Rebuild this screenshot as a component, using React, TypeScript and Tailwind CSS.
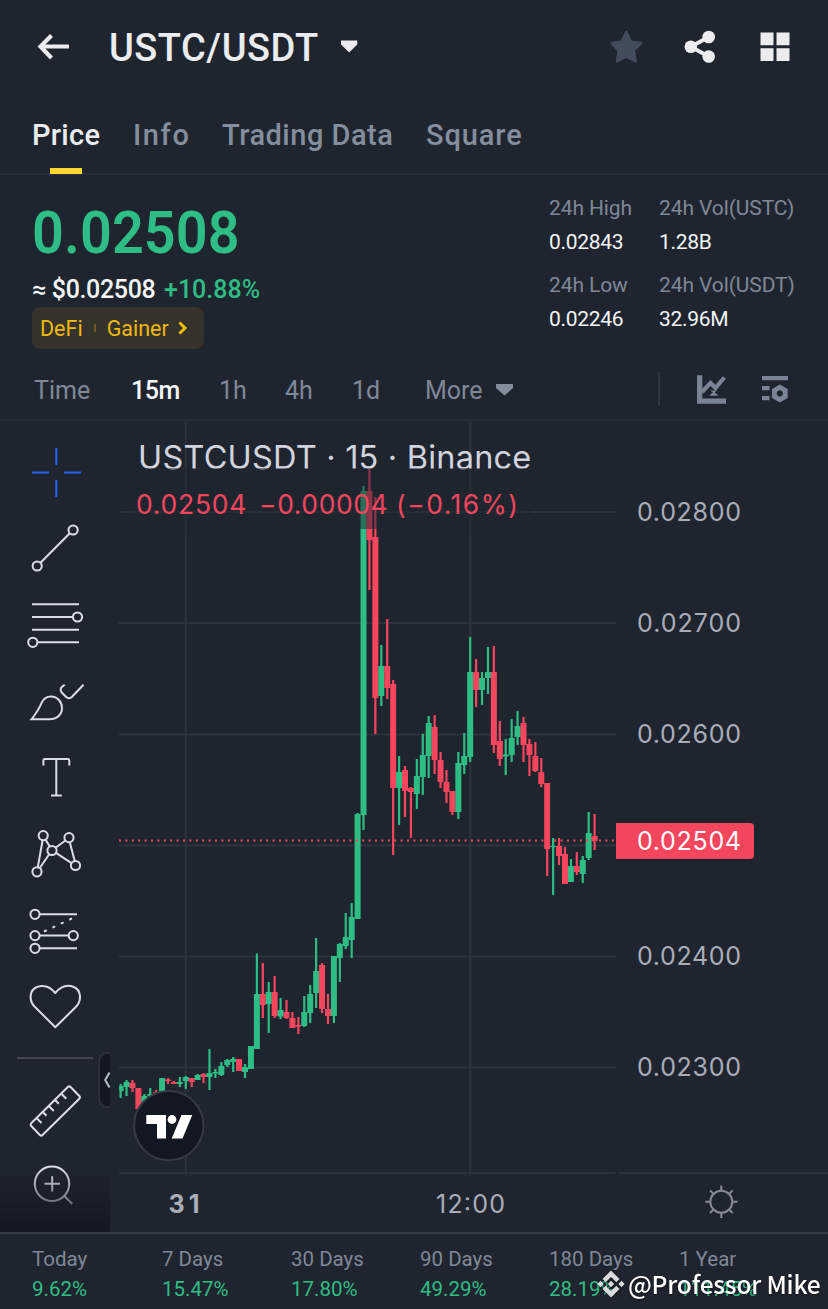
import React from "react";

type Candle = [color: "g" | "r", high: number, top: number, bottom: number, low: number];

const GREEN = "#2ebd85";
const RED = "#f6465d";

/* 15 minute candles, oldest first, in chart pixels */
const candles: Candle[] = [
  ["g", 1084, 1086, 1091, 1098], ["g", 1080, 1082, 1087, 1096], ["r", 1080, 1083, 1088, 1092],
  ["r", 1088, 1088, 1109, 1110], ["g", 1094, 1096, 1104, 1110], ["g", 1088, 1094, 1096, 1100],
  ["r", 1090, 1092, 1094, 1098], ["g", 1078, 1078, 1092, 1095], ["r", 1078, 1079.5, 1081, 1084],
  ["r", 1081, 1082, 1084, 1084], ["g", 1077, 1082, 1084, 1087], ["g", 1076, 1077, 1081, 1089],
  ["r", 1078, 1078, 1082, 1087], ["g", 1074, 1075, 1080, 1080], ["r", 1073, 1074, 1077, 1083],
  ["g", 1049, 1073, 1077, 1090], ["g", 1069, 1072, 1073.5, 1078], ["g", 1062, 1066, 1075, 1076],
  ["g", 1059, 1060, 1065, 1067], ["g", 1057, 1059, 1062, 1072], ["r", 1059, 1059, 1071, 1071],
  ["g", 1064, 1067, 1072, 1078], ["g", 1046, 1046, 1069, 1069], ["g", 953.5, 994, 1049, 1049],
  ["r", 963, 994, 1005, 1018], ["g", 982, 992, 1004, 1033], ["r", 976, 992, 1016, 1018],
  ["g", 998, 1010, 1016.5, 1019], ["r", 1000, 1012, 1018, 1019], ["r", 1012, 1018, 1028, 1028],
  ["r", 1017, 1025, 1026.5, 1034], ["g", 996, 1012, 1026, 1027], ["g", 985, 994, 1013, 1023],
  ["g", 938, 971, 993, 1008], ["r", 963, 965, 1009, 1013], ["r", 994, 1009, 1016, 1024],
  ["g", 956, 956, 1016, 1023], ["g", 943, 944, 958, 982], ["g", 913, 937, 946, 949],
  ["g", 903, 917, 940, 958], ["g", 813, 814, 919, 919], ["g", 486, 491, 815, 830],
  ["r", 468, 491, 540, 590], ["r", 497, 537, 698, 734], ["g", 645, 666, 696, 706],
  ["r", 619, 666, 688, 699], ["r", 680, 684, 788, 855], ["g", 756, 772, 788, 825],
  ["r", 766, 770, 791, 817], ["r", 787, 788, 792, 838], ["g", 759, 776, 794, 809],
  ["g", 734, 755, 777, 795], ["g", 716, 723, 756, 778], ["r", 715, 727, 760, 774],
  ["r", 752, 760, 782, 788], ["r", 770, 782, 792, 803], ["r", 791, 791, 812, 815],
  ["g", 752, 763, 812, 819], ["g", 733, 756, 765, 774], ["g", 637, 672, 757, 762],
  ["r", 659, 672, 690, 707], ["g", 672, 678, 690, 705], ["g", 647, 672, 678, 694],
  ["r", 646, 672, 745, 753], ["r", 721, 741, 759, 766], ["g", 739, 754.5, 756.5, 775],
  ["g", 719, 738, 755, 762], ["g", 711, 726, 737, 745], ["r", 717, 723, 745, 762],
  ["r", 739, 744, 755, 776], ["r", 742, 756, 771, 772], ["r", 758, 772, 784, 787],
  ["r", 783, 783, 849, 876], ["g", 838, 846, 847, 895], ["r", 838, 846, 856, 865],
  ["r", 847, 854, 884, 884], ["g", 859, 866, 882, 882], ["r", 852, 866, 872, 875],
  ["g", 856, 860, 874, 883], ["g", 812, 833, 858, 860], ["r", 814, 836, 841, 850],
];

const axisLabels = [
  { y: 512, label: "0.02800" },
  { y: 623, label: "0.02700" },
  { y: 734.5, label: "0.02600" },
  { y: 845.5, label: "" },
  { y: 956.5, label: "0.02400" },
  { y: 1067.5, label: "0.02300" },
];

const performance = [
  { label: "Today", value: "9.62%" },
  { label: "7 Days", value: "15.47%" },
  { label: "30 Days", value: "17.80%" },
  { label: "90 Days", value: "49.29%" },
  { label: "180 Days", value: "28.19%" },
  { label: "1 Year", value: "111.45%" },
];

function Header() {
  return (
    <header className="flex h-[93px] items-center text-[#eaecef]">
      <svg className="ml-[37px] h-[26px] w-[33px] shrink-0" viewBox="37 33.5 33 26" fill="none" stroke="currentColor" strokeWidth="4.2">
        <path d="M69 46H41M51.5 35L40.5 46L51.5 57.5" />
      </svg>
      <h1 className="ml-[39px] w-[211px] pt-[3px] text-[38px] leading-[50px] font-medium tracking-[0.5px] whitespace-nowrap">USTC/USDT</h1>
      <svg className="ml-[20px] h-[14px] w-[19px]" viewBox="340 39.5 19 14" fill="currentColor">
        <path d="M341 40H357.3V44L349.2 52L341 44Z" />
      </svg>
      <svg className="ml-[250px] h-[34px] w-[34px] text-[#434c5a]" viewBox="609 30 34 34" fill="currentColor" stroke="currentColor" strokeWidth="2.5" strokeLinejoin="round">
        <path d="M626.3 32L631 41.8L641.3 43.1L633.8 50.6L635.6 61.3L626.3 56.4L617 61.3L618.8 50.6L611.6 43.1L621.6 41.8Z" />
      </svg>
      <svg className="ml-[41px] h-[34px] w-[32px]" viewBox="684 30 32 34" fill="currentColor">
        <path d="M708.7 37L690.8 46.7L708.7 56.5" fill="none" stroke="currentColor" strokeWidth="4" />
        <circle cx="708.7" cy="37" r="6.3" /><circle cx="690.8" cy="46.7" r="6.3" /><circle cx="708.7" cy="56.5" r="6.3" />
      </svg>
      <svg className="ml-[44px] h-[30px] w-[30px]" viewBox="760 32 30 30" fill="currentColor">
        <path d="M760.5 32.5h13v12.8h-13zM776.5 32.5h13v12.8h-13zM760.5 48.2h13v12.8h-13zM776.5 48.2h13v12.8h-13z" />
      </svg>
    </header>
  );
}

function Tabs() {
  return (
    <nav className="flex h-[82px] border-b-2 border-[#272e38] pl-[32px] text-[29px] leading-[85px] font-medium tracking-[0.5px] whitespace-nowrap text-[#848e9c]">
      <div className="relative w-[101px] tracking-[0.3px] text-[#eaecef]">
        Price
        <span className="absolute top-[75px] left-[18px] h-[6px] w-[32px] bg-[#fcd535]" />
      </div>
      <div className="w-[89px] tracking-[1.6px]">Info</div>
      <div className="w-[204px]">Trading Data</div>
      <div className="tracking-[0.9px]">Square</div>
    </nav>
  );
}

function Stat({ label, value }: { label: string; value: string }) {
  return (
    <div className="flex flex-col">
      <span className="h-[34px] tracking-[-0.1px] text-[#7f8896]">{label}</span>
      <span className="h-[42px] tracking-[-0.3px] text-[#f4f5f7]">{value}</span>
    </div>
  );
}

function Ticker() {
  return (
    <section className="flex h-[184px] whitespace-nowrap">
      <div className="w-[549px] pl-[32px]">
        <div className="h-[97px] origin-left scale-x-[0.93] pt-[28px] text-[60px] leading-[60px] font-semibold tracking-[0.1px] text-[#2ebd85]">0.02508</div>
        <div className="flex h-[35px] text-[25px] leading-[35px] font-medium">
          <span className="w-[132px] tracking-[-0.35px] text-[#f4f5f7]">≈ $0.02508</span>
          <span className="text-[#2ebd85]">+10.88%</span>
        </div>
        <div className="flex h-[42px] w-[172px] items-center rounded-[8px] bg-[#35332c] pl-[8px] text-[21.5px] text-[#f0b90b]">
          <span className="pt-[2px]">DeFi</span>
          <span className="ml-[11px] h-[8px] w-[2px] bg-[#6b5a24]" />
          <span className="ml-[11px] pt-[2px]">Gainer</span>
          <svg className="ml-[9px] h-[14px] w-[10px]" viewBox="0 0 10 14" fill="none" stroke="currentColor" strokeWidth="3">
            <path d="M1.5 1.5L7 7L1.5 12.5" />
          </svg>
        </div>
      </div>
      <div className="grid w-[260px] grid-cols-[110px_1fr] grid-rows-[76.5px_76px] pt-[16px] text-[21px] leading-[35px]">
        <Stat label="24h High" value="0.02843" />
        <Stat label="24h Vol(USTC)" value="1.28B" />
        <Stat label="24h Low" value="0.02246" />
        <Stat label="24h Vol(USDT)" value="32.96M" />
      </div>
    </section>
  );
}

function Intervals() {
  return (
    <div className="flex h-[62px] items-center border-b-2 border-[#272e38] pl-[34px] text-[25px] whitespace-nowrap text-[#7f8896]">
      <span className="w-[97px] pt-[3px]">Time</span>
      <span className="w-[88px] pt-[3px] font-medium tracking-[-0.4px] text-[#f4f5f7]">15m</span>
      <span className="w-[66px] pt-[3px]">1h</span>
      <span className="w-[67px] pt-[3px]">4h</span>
      <span className="w-[73px] pt-[3px]">1d</span>
      <span className="w-[70px] pt-[3px]">More</span>
      <svg className="h-[13px] w-[19px]" viewBox="0 0 19 13" fill="#848e9c"><path d="M1 1H18V5L9.500 12.500L1 5Z" /></svg>
      <span className="ml-[144px] h-[34px] w-[2px] bg-[#2f3641]" />
      <svg className="ml-[36px] h-[31px] w-[31px]" viewBox="696 373 31 31" fill="#7a8494">
        <path d="M697 374.300h5.300v23.200h23.700v5.300h-29z" />
        <path d="M702 391L710.500 382L715.500 387L724.300 376.500" fill="none" stroke="#7a8494" strokeWidth="4.200" />
        <path d="M710 389.500h7.500L714.500 391.300L718.500 394.700h-9.500L713 391.300Z" />
      </svg>
      <svg className="ml-[34px] h-[30px] w-[28px]" viewBox="761 374 28 30" fill="#7a8494">
        <path d="M762 376h26v4.300h-26zM762 386h7.500v4.200h-7.500zM762 396h7.500v4.200h-7.500z" />
        <path fillRule="evenodd" d="M779.800 384.500L787.700 389V398L779.800 402.500L772 398V389ZM779.800 390.300a3.100 3.100 0 1 0 0.010 0Z" />
      </svg>
    </div>
  );
}

function Tool({ top, children }: { top: number; children: React.ReactNode }) {
  return (
    <svg className="h-[76px] w-[110px] shrink-0" viewBox={`0 ${top} 110 76`} fill="none" stroke="#dbdde6" strokeWidth="2">
      {children}
    </svg>
  );
}

function Toolbar() {
  return (
    <aside className="relative flex h-[811px] w-[110px] shrink-0 flex-col pt-[13px]">
      <Tool top={434}>
        <path stroke="#2962ff" d="M56.300 448V465M56.300 480V497M32 472.600H49M64 472.600H81" />
      </Tool>
      <Tool top={510}>
        <circle cx="73.100" cy="530" r="4.600" /><circle cx="37.200" cy="566" r="4.600" /><path d="M40.500 562.700L69.800 533.300" />
      </Tool>
      <Tool top={586}>
        <path d="M32 604.200H79M32 617H73M32 629.700H79M37.500 642.300H79" /><circle cx="77.500" cy="617" r="4.600" /><circle cx="32.800" cy="642.300" r="4.600" />
      </Tool>
      <Tool top={662}>
        <path d="M31.500 719.300C36.500 713 39.500 708 41.500 703C43.500 698.500 47 696.500 51 696.500C57.500 696.500 62 702 62 708C62 714.500 57 719.300 50 719.300Z" />
        <path d="M83.500 684.700L71.800 697C70.200 698.600 67.800 698.600 66.200 697L62 692.800C60.200 691 60.300 688.500 61.800 687L64.700 684.700" />
      </Tool>
      <Tool top={738}>
        <path d="M43.400 765.500V760.500Q43.400 759.100 44.800 759.100H67.900Q69.300 759.100 69.300 760.500V765.500M56.300 759V795.500M51 795.500H61.800" />
      </Tool>
      <Tool top={814}>
        <circle cx="43.200" cy="835.600" r="4.600" /><circle cx="69" cy="837.600" r="4.600" /><circle cx="52" cy="850.500" r="4.600" /><circle cx="37" cy="871.800" r="4.600" /><circle cx="75.500" cy="865.500" r="4.600" />
        <path d="M42.600 840.200L37.800 867.200M45.500 839.600L49.800 846.500M39.800 868L49.200 854.200M55.600 847.700L65.400 840.500M56 852.900L71.500 863.200M69.800 842.200L74.700 861" />
      </Tool>
      <Tool top={890}>
        <circle cx="35" cy="914.300" r="4.600" /><circle cx="35" cy="935.600" r="4.600" /><circle cx="73.300" cy="935.600" r="4.600" /><circle cx="35" cy="948.300" r="4.600" />
        <path d="M39.600 914.300H77M39.600 935.600H68.700M39.600 948.300H77" /><path strokeDasharray="3 6.300" d="M44 931.500L73 918" />
      </Tool>
      <Tool top={966}>
        <path strokeLinejoin="round" d="M55.300 1027.200L34.500 1006.500C28.500 1000 29.500 990 37 987C43.500 984.500 50 986.500 55.300 993C60.600 986.500 67.500 984.500 73.800 987C81 990 82 1000 76.300 1006.500Z" />
      </Tool>
      <div className="mt-[15px] ml-[17px] h-[2px] w-[76px] shrink-0 bg-[#434651]" />
      <div className="h-[14px] shrink-0" />
      <Tool top={1073}>
        <path strokeLinejoin="round" d="M67.800 1087Q69.200 1085.700 70.600 1087L79.300 1096Q80.600 1097.300 79.300 1098.700L42.500 1135Q41.200 1136.300 39.800 1135L31.200 1126Q30 1124.700 31.200 1123.300Z" />
        <path d="M36.500 1118L41.500 1123M42.700 1112L46.500 1115.800M48.800 1106L53.800 1111M55 1100L58.800 1103.800M61.300 1093.800L66.300 1098.800" />
      </Tool>
      <Tool top={1149}>
        <circle cx="52" cy="1183.800" r="17.200" /><path d="M44.500 1183.800H60M52.200 1176.300V1191.500M64.300 1196L72.300 1204" />
      </Tool>
      <div className="absolute bottom-0 left-0 h-[64px] w-[110px] bg-linear-to-b from-transparent to-[#131722]" />
      <div className="absolute top-[631px] right-0 flex h-[56px] w-[12px] items-center justify-end rounded-l-[9px] border-2 border-r-0 border-[#2a2f3a] bg-[#131722]">
        <svg className="h-[16px] w-[6px] shrink-0" viewBox="0 0 6 16" fill="none" stroke="#b2c0cc" strokeWidth="2"><path d="M5.500 0.500L1.200 8L5.500 15.500" /></svg>
      </div>
    </aside>
  );
}

function Chart() {
  return (
    <div className="relative h-[811px] w-[718px]">
      <svg className="block h-[811px] w-[718px] font-[Inter,sans-serif]" viewBox="110 421 718 811">
        <g stroke="#2d333d" strokeWidth="2">
          {axisLabels.map((a) => <path key={a.y} d={`M119 ${a.y}H616`} />)}
          <path d="M185.700 421V1173M470.300 421V1173M119 1173.200H615.500M618 1173.200H828" />
        </g>
        {candles.map(([c, high, top, bottom, low], i) => {
          const x = 120.6 + i * 5.925;
          const color = c === "g" ? GREEN : RED;
          return (
            <g key={i} fill={color}>
              <rect x={x - 1.1} y={high} width={2.2} height={low - high} />
              <rect x={i === 0 ? x - 1.4 : x - 3} y={top} width={i === 0 ? 4.4 : 6} height={bottom - top} />
            </g>
          );
        })}
        <path d="M119 840.600H616" stroke={RED} strokeWidth="2" strokeDasharray="2 4.400" />
        <path d="M616 823h134a4 4 0 0 1 4 4v28a4 4 0 0 1-4 4h-134z" fill={RED} />
        <g fontSize="25" fill="#a9adb8">
          {axisLabels.map((a) => <text key={a.y} x="637" y={a.y + 8.700} textLength="104">{a.label}</text>)}
          <text x="637" y="849.500" textLength="104" fill="#ffffff">0.02504</text>
          <text x="168.500" y="1212.500" textLength="31" fontWeight="700">31</text>
          <text x="436" y="1212.500" textLength="69">12:00</text>
        </g>
        <g fill="none" stroke="#868b97" strokeWidth="2">
          <circle cx="721.300" cy="1201.700" r="11" />
          <path d="M721.300 1190.500V1185.500M721.300 1213V1218M710 1201.700H705.300M732.500 1201.700H737.500M713.500 1193.900L710 1190.400M729.200 1193.900L732.700 1190.400M713.500 1209.500L710 1213M729.200 1209.500L732.700 1213" />
        </g>
        <circle cx="168.800" cy="1125.600" r="34.700" fill="#131722" stroke="#363a45" strokeWidth="2" />
        <path fill="#ffffff" d="M146.300 1115H166V1138.500H157V1124H146.300ZM181.500 1115H192.300L182.500 1138.500H171.700Z" />
        <circle cx="172" cy="1119.500" r="4.400" fill="#ffffff" />
      </svg>
      <div className="absolute top-[14px] left-[16px] flex w-[405px] flex-col font-[Inter,sans-serif] whitespace-nowrap">
        <div className="h-[33px] pl-[12px] text-[32.5px] leading-[45px] tracking-[0.2px] text-[#d1d4dc]">USTCUSDT · 15 · Binance</div>
        <div className="flex h-[61px] bg-[#1f252f]/50 pl-[10px] text-[26.5px] leading-[73px] text-[#f6465d]">
          <span className="w-[123px] tracking-[0.75px]">0.02504</span>
          <span className="w-[137px] tracking-[0.6px]">−0.00004</span>
          <span className="tracking-[1.5px]">(−0.16%)</span>
        </div>
      </div>
    </div>
  );
}

function Performance() {
  return (
    <footer className="relative grid h-[77px] grid-cols-[130px_129px_129px_129px_130px_1fr] border-t-2 border-[#343a45] pt-[10px] pl-[32px] text-[20.5px] whitespace-nowrap">
      {performance.map((p) => (
        <div key={p.label} className="flex flex-col">
          <span className="h-[30px] leading-[30px] text-[#7f8896]">{p.label}</span>
          <span className="h-[30px] leading-[30px] text-[#2ebd85]">{p.value}</span>
        </div>
      ))}
      <div className="absolute top-[32px] left-[597px] flex h-[36px] items-center font-['Noto_Sans_CJK_SC','Noto_Sans',sans-serif] text-[24.5px] font-medium tracking-[-0.2px] text-white drop-shadow-[0_1px_1px_rgba(0,0,0,0.5)]">
        <svg className="h-[28px] w-[28px]" viewBox="0 0 28 28" fill="#d9dadc">
          <path d="M14 0.500L22.500 9L19.300 12.200L14 6.900L8.700 12.200L5.500 9ZM14 27.500L22.500 19L19.300 15.800L14 21.100L8.700 15.800L5.500 19ZM14 10.800L17.200 14L14 17.200L10.800 14ZM3.500 10.800L6.700 14L3.500 17.200L0.300 14ZM24.500 10.800L27.700 14L24.500 17.200L21.300 14Z" />
        </svg>
        <span className="ml-[3px]">@Professor Mike</span>
      </div>
    </footer>
  );
}

export default function App() {
  return (
    <main className="flex h-[1309px] w-[828px] flex-col overflow-hidden bg-[#1f252f] font-[Roboto,sans-serif]">
      <Header />
      <Tabs />
      <Ticker />
      <Intervals />
      <div className="flex">
        <Toolbar />
        <Chart />
      </div>
      <Performance />
    </main>
  );
}
